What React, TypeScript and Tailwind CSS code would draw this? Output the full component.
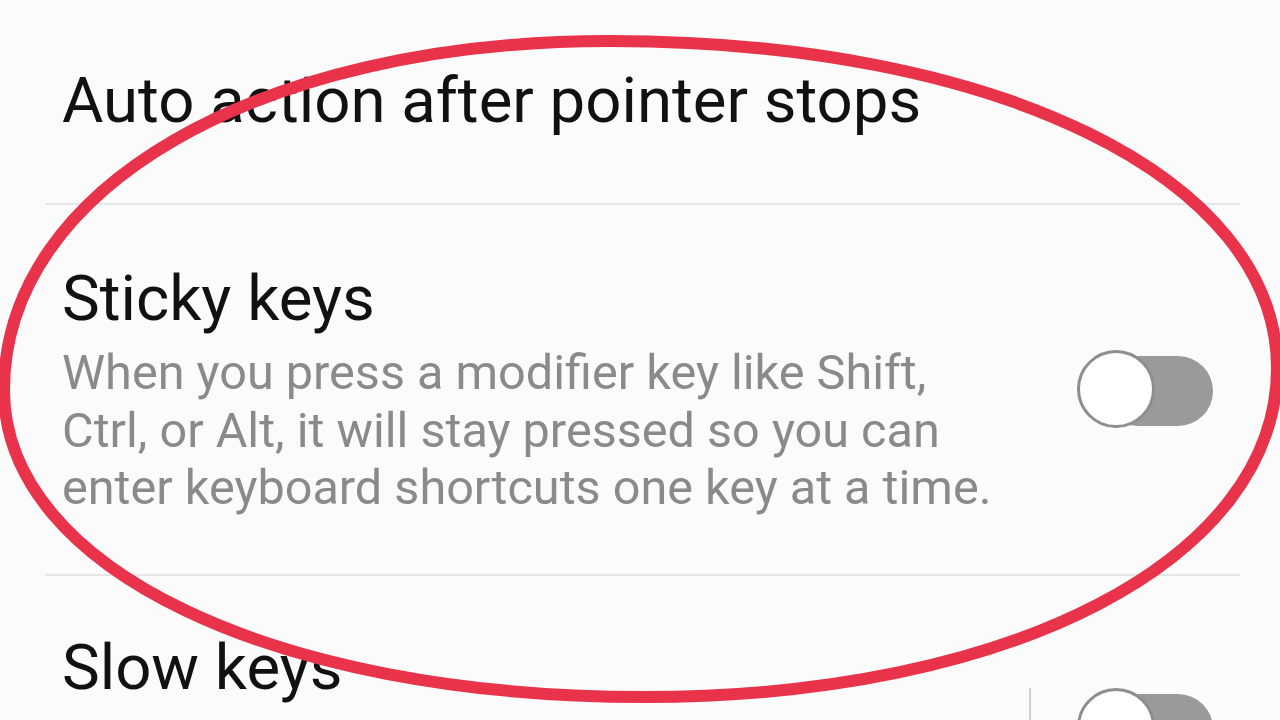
import React from 'react';

interface ToggleProps {
  divider?: boolean;
}

const Toggle: React.FC<ToggleProps> = ({ divider }) => (
  <div className="flex items-center shrink-0">
    {divider && <div className="w-[2px] h-[80px] bg-[#cfcfcf] mr-[46px] self-start mt-[1px]" />}
    <div className="relative w-[136px] h-[78px]">
      <div className="absolute right-0 top-[6px] h-[70px] w-[110px] rounded-full bg-[#9a9a9a]" />
      <div className="absolute left-0 top-0 w-[78px] h-[78px] rounded-full bg-white border-[3px] border-[#8e8e8e]" />
    </div>
  </div>
);

const App: React.FC = () => {
  return (
    <div
      className="relative w-[1280px] h-[720px] overflow-hidden bg-[#fbfbfb] text-[#111]"
      style={{ fontFamily: 'Roboto, "Noto Sans", sans-serif' }}
    >
      <div className="pl-[45px] pr-[40px]">
        {/* Auto action */}
        <div className="px-[17px] pt-[63px] pb-[64px]">
          <div className="text-[63.5px] leading-[76px]">Auto action after pointer stops</div>
        </div>
        <div className="h-[2px] bg-[#e6e6e6]" />

        {/* Sticky keys */}
        <div className="flex items-center justify-between pl-[17px] pr-[27px] pt-[56px] pb-[57px]">
          <div>
            <div className="text-[63.5px] leading-[76px]">Sticky keys</div>
            <div className="mt-[7px] text-[48.6px] leading-[57.5px] text-[#8a8a8a]">
              When you press a modifier key like Shift,
              <br />
              Ctrl, or Alt, it will stay pressed so you can
              <br />
              enter keyboard shortcuts one key at a time.
            </div>
          </div>
          <Toggle />
        </div>
        <div className="h-[2px] bg-[#e6e6e6]" />

        {/* Slow keys */}
        <div className="flex items-start justify-between pl-[17px] pr-[27px] pt-[54px]">
          <div className="text-[63.5px] leading-[76px]">Slow keys</div>
          <div className="mt-[57px]">
            <Toggle divider />
          </div>
        </div>
      </div>

      {/* red annotation ring */}
      <svg className="absolute inset-0 pointer-events-none" width="1280" height="720" viewBox="0 0 1280 720">
        <path
          d="M 4 390 C 4 188 258 41 610 41 C 997 41 1277 178 1277 368 C 1277 559 1012 697 645 697 C 273 697 4 568 4 390 Z"
          fill="none"
          stroke="#e8334b"
          strokeWidth="12"
        />
      </svg>
    </div>
  );
};

export default App;
